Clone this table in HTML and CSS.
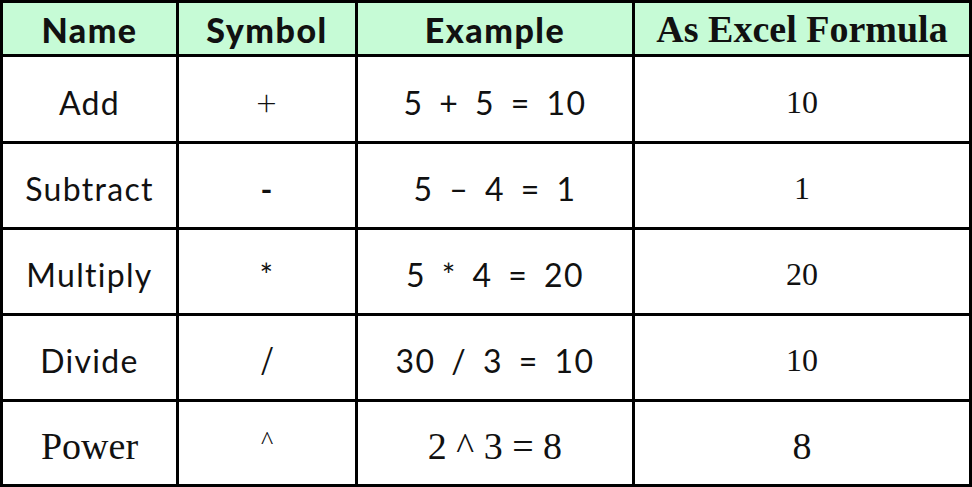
FILE: index.html
```html
<!DOCTYPE html>
<html>
<head>
<meta charset="utf-8">
<link rel="stylesheet" href="styles.css">
</head>
<body>
<div class="grid">
  <div class="cell head sans">Name</div>
  <div class="cell head sans">Symbol</div>
  <div class="cell head sans">Example</div>
  <div class="cell head serif">As Excel Formula</div>

  <div class="cell sans">Add</div>
  <div class="cell sans plus">+</div>
  <div class="cell sans eq">5 + 5 = 10</div>
  <div class="cell serif">10</div>

  <div class="cell sans">Subtract</div>
  <div class="cell sans sym-minus">-</div>
  <div class="cell sans eq">5 – 4 = 1</div>
  <div class="cell serif">1</div>

  <div class="cell sans">Multiply</div>
  <div class="cell sans">*</div>
  <div class="cell sans eq">5 * 4 = 20</div>
  <div class="cell serif">20</div>

  <div class="cell sans">Divide</div>
  <div class="cell serif slash">/</div>
  <div class="cell sans eq">30 / 3 = 10</div>
  <div class="cell serif">10</div>

  <div class="cell serif big">Power</div>
  <div class="cell serif caret">^</div>
  <div class="cell serif big">2 ^ 3 = 8</div>
  <div class="cell serif big">8</div>
</div>
</body>
</html>
```
FILE: styles.css
```css
html, body {
  margin: 0;
  padding: 0;
  background: #ffffff;
}
.grid {
  width: 972px;
  height: 487px;
  box-sizing: border-box;
  display: grid;
  grid-template-columns: 173px 176px 274px 334px;
  grid-template-rows: 51px 84px 83px 83px 83px 82px;
  gap: 3px;
  padding: 3px;
  background: #000000;
}
.cell {
  background: #ffffff;
  display: flex;
  align-items: center;
  justify-content: center;
  padding-top: 6px;
  box-sizing: border-box;
  color: #111111;
  white-space: pre;
}
.head {
  background: #c6fbd6;
  padding-top: 1px;
}
.sans {
  font-family: "Lato", "DejaVu Sans", sans-serif;
  font-size: 32px;
  font-weight: 400;
  letter-spacing: 1.3px;
}
.eq {
  word-spacing: 6px;
  letter-spacing: 1.5px;
}
.head.sans {
  font-weight: 900;
  font-size: 34px;
  letter-spacing: 1.5px;
}
.serif {
  font-family: "Liberation Serif", "Times New Roman", serif;
  font-size: 32px;
}
.head.serif {
  font-weight: 700;
  font-size: 38px;
}
.big {
  font-size: 38px;
}
.plus {
  font-size: 36px;
  font-weight: 300;
}
.slash {
  font-size: 42px;
}
.caret {
  font-size: 26px;
  padding-bottom: 10px;
}
.sym-minus {
  font-weight: 700;
}
```
